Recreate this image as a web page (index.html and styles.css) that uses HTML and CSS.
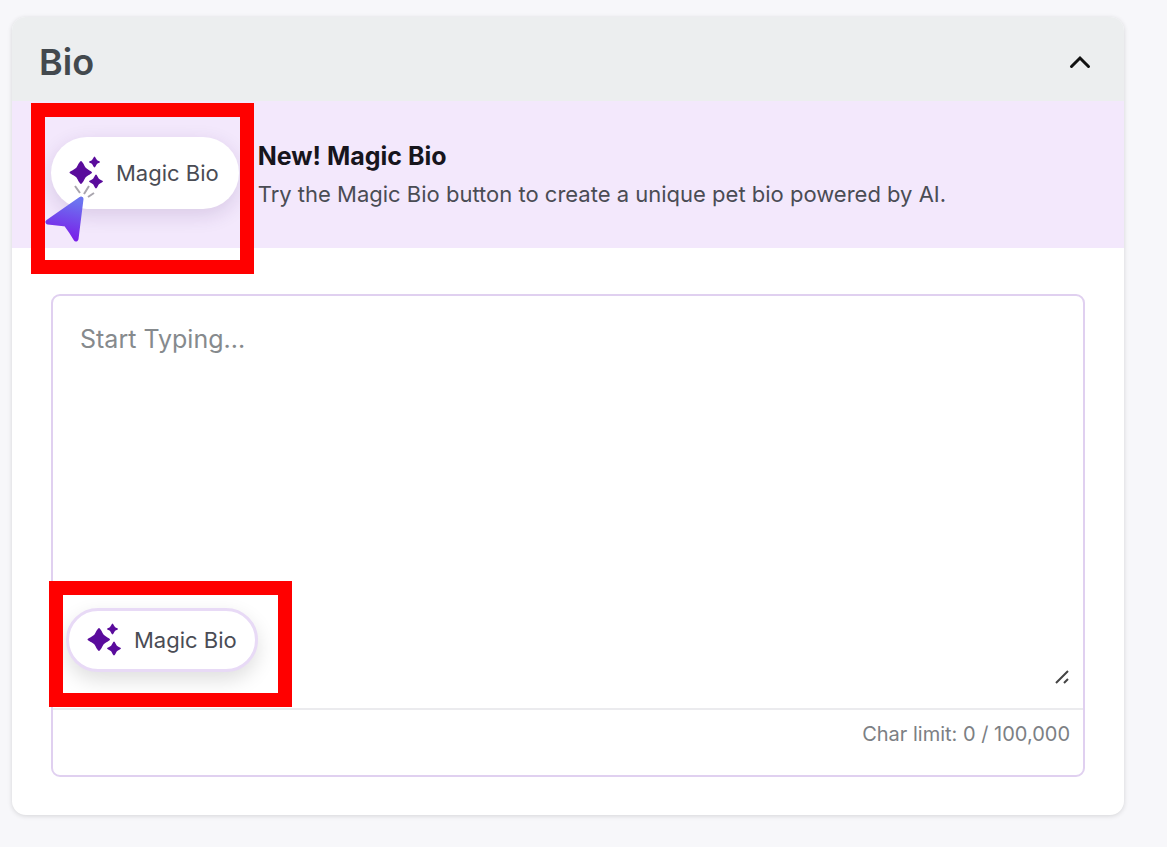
FILE: index.html
```
<!DOCTYPE html>
<html lang="en">
<head>
    <meta charset="UTF-8">
    <meta name="viewport" content="width=device-width, initial-scale=1.0">
    <title>Pet Bio</title>
    <link rel="stylesheet" href="styles.css">
</head>
<body>
    <!-- shared sparkle icon -->
    <svg class="defs" width="0" height="0" aria-hidden="true">
        <symbol id="sparkles" viewBox="0 0 34 34">
            <path d="M12 5C13.200 5 15 9 16.500 11.500C18.500 13.500 23 15.500 23 16.500C23 17.500 18.500 19.500 16.500 21.500C15 24 13.200 28 12 28C10.800 28 9 24 7.500 21.500C5.500 19.500 0.500 17.500 0.500 16.500C0.500 15.500 5.500 13.500 7.500 11.500C9 9 10.800 5 12 5Z"/>
            <path d="M25.500 0.500C26.300 0.500 27 3 28 4C29 5 31 5.300 31 6C31 6.700 29 7 28 8C27 9 26.300 11.500 25.500 11.500C24.700 11.500 24 9 23 8C22 7 20 6.700 20 6C20 5.300 22 5 23 4C24 3 24.700 0.500 25.500 0.500Z"/>
            <path d="M27 18.500C28 18.500 28.800 21.500 29.900 22.800C31 24 34 24.700 34 25.500C34 26.300 31 27 29.900 28.200C28.800 29.500 28 32.500 27 32.500C26 32.500 25.200 29.500 24.100 28.200C23 27 20 26.300 20 25.500C20 24.700 23 24 24.100 22.800C25.200 21.500 26 18.500 27 18.500Z"/>
        </symbol>
    </svg>

    <section class="card">
        <div class="card-header">
            <h2>Bio</h2>
            <button type="button" class="collapse-btn" aria-label="Collapse" aria-expanded="true">
                <svg width="24" height="16" viewBox="0 0 24 16"><path d="M3.500 12.500L12 4L20.500 12.500"/></svg>
            </button>
        </div>

        <div class="banner">
            <div class="promo">
                <button type="button" class="magic-btn">
                    <svg class="sparkles"><use href="#sparkles"/></svg>
                    Magic Bio
                </button>
                <svg class="cursor" width="50" height="60" viewBox="0 0 50 60" aria-hidden="true">
                    <defs>
                        <linearGradient id="cursor-fill" x1="0.6" y1="0" x2="0.4" y2="1">
                            <stop offset="0" stop-color="#6c74f0"/>
                            <stop offset="1" stop-color="#7a1be8"/>
                        </linearGradient>
                    </defs>
                    <path class="click" d="M30 1L35 8M44 1L39 9M49 8L43 12"/>
                    <path class="arrow" d="M36 14L3 37L21 39Q27 47 31 54Z"/>
                </svg>
                <span class="highlight"></span>
            </div>
            <div class="banner-text">
                <h3>New! Magic Bio</h3>
                <p>Try the Magic Bio button to create a unique pet bio powered by AI.</p>
            </div>
        </div>

        <div class="card-body">
            <div class="editor">
                <div class="editor-main">
                    <textarea aria-label="Bio" placeholder="Start Typing..."></textarea>
                    <div class="editor-action">
                        <button type="button" class="magic-btn outlined">
                            <svg class="sparkles"><use href="#sparkles"/></svg>
                            Magic Bio
                        </button>
                        <span class="highlight"></span>
                    </div>
                    <svg class="grip" width="16" height="16" viewBox="0 0 16 16" aria-hidden="true"><path d="M2 14L14 2M10 14L14 10"/></svg>
                </div>
                <div class="editor-footer">Char limit: 0 / 100,000</div>
            </div>
        </div>
    </section>
</body>
</html>
```
FILE: styles.css
```
* { box-sizing: border-box; }
body {
    margin: 0;
    padding: 17px 43px 33px 12px;
    background: #f7f7fa;
    color: #4a4c54;
    font-family: Inter, "Open Sans", sans-serif;
}
h2, h3, p { margin: 0; }
button {
    font-family: inherit;
    cursor: pointer;
}
.defs { position: absolute; }

.card {
    background: white;
    border-radius: 14px;
    box-shadow: 0 1px 5px rgba(0, 0, 0, 0.14);
}
.card-header {
    display: flex;
    align-items: center;
    justify-content: space-between;
    padding: 23px 32px 17px 27px;
    background: #eceeef;
    border-radius: 14px 14px 0 0;
}
.card-header h2 {
    font-size: 36px;
    line-height: 44px;
    font-weight: 600;
    color: #43494e;
}
.collapse-btn {
    display: flex;
    padding: 0;
    background: none;
    border: none;
}
.collapse-btn path {
    fill: none;
    stroke: #111;
    stroke-width: 3;
    stroke-linecap: round;
}

.banner {
    display: flex;
    align-items: flex-start;
    gap: 19px;
    padding: 36px 39px 35px;
    background: #f3e8fc;
}
.promo { position: relative; }
.magic-btn {
    display: flex;
    align-items: center;
    gap: 13px;
    padding: 19px 20px 19px 18px;
    background: white;
    border: none;
    border-radius: 36px;
    box-shadow: 0 6px 20px rgba(60, 20, 100, 0.14);
    color: #4a4c54;
    font-size: 22px;
    line-height: 34px;
    font-weight: 400;
    white-space: nowrap;
}
.magic-btn.outlined {
    padding: 12px 18px;
    border: 3px solid #e8daf6;
    box-shadow: 0 8px 20px rgba(0, 0, 0, 0.13);
}
.sparkles {
    width: 34px;
    height: 34px;
    fill: #5a0c9c;
}
.cursor {
    position: absolute;
    left: -6px;
    top: 48px;
}
.click {
    fill: none;
    stroke: #a9a5ae;
    stroke-width: 2;
}
.arrow {
    fill: url(#cursor-fill);
    stroke: url(#cursor-fill);
    stroke-width: 5;
    stroke-linejoin: round;
}
.highlight {
    position: absolute;
    border: 14px solid #ff0000;
    pointer-events: none;
}
.promo .highlight { inset: -34px -15px -65px -20px; }
.banner-text h3 {
    font-size: 25px;
    line-height: 38px;
    font-weight: 700;
    color: #17151c;
}
.banner-text p {
    font-size: 22px;
    line-height: 38px;
    font-weight: 400;
}

.card-body { padding: 46px 39px 38px; }
.editor {
    border: 2px solid #e0d0f0;
    border-radius: 9px;
}
.editor-main {
    position: relative;
    display: flex;
    border-bottom: 2px solid #ebebee;
}
.editor textarea {
    flex: 1;
    height: 412px;
    padding: 24px 27px;
    background: none;
    border: none;
    outline: none;
    resize: none;
    color: #4a4c54;
    font-family: inherit;
    font-size: 25px;
    line-height: 38px;
}
.editor textarea::placeholder { color: #868a8d; }
.editor-action {
    position: absolute;
    left: 13px;
    bottom: 36px;
}
.editor-action .highlight { inset: -27px -34px -35px -17px; }
.grip {
    position: absolute;
    right: 13px;
    bottom: 23px;
    fill: none;
    stroke: #444;
    stroke-width: 2;
}
.editor-footer {
    padding: 8px 13px 25px;
    text-align: right;
    font-size: 20px;
    line-height: 32px;
    font-weight: 400;
    color: #7c8084;
}
```
